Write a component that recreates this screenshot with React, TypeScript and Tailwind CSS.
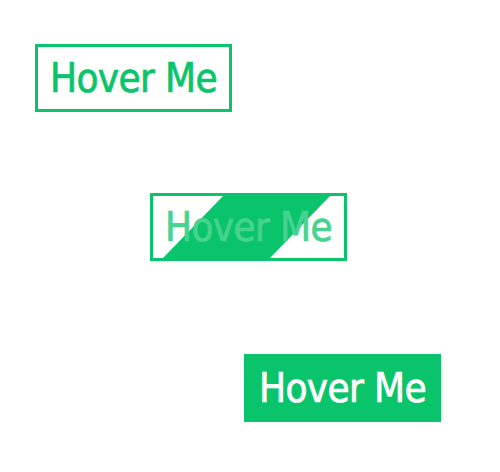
const outline = 'border-[3px] border-[#0ac46b]';
const label = "font-['DejaVu_Sans_Condensed','DejaVu_Sans',sans-serif] text-[40px] leading-none tracking-[-0.6px] [-webkit-text-stroke:0.7px_currentColor]";

export default function App() {
  return (
    <div className="w-[500px] h-[472px] bg-white">
      <div className="flex flex-col items-start pt-[44px]">
        {/* outline button */}
        <button className={`ml-[35px] w-[197px] h-[68px] ${outline} bg-white text-[#0ac46b] ${label} flex items-center justify-center`}>
          Hover Me
        </button>

        {/* mid-hover: diagonal sweep */}
        <button className={`relative ml-[150px] mt-[81px] w-[197px] h-[68px] ${outline} bg-white text-[#45d38f] ${label} flex items-center justify-center overflow-hidden`}>
          <span className="absolute inset-0 bg-[#0ac46b] [clip-path:polygon(70px_0,177px_0,117px_100%,10px_100%)]" />
          <span className="relative">Hover Me</span>
        </button>

        {/* filled state */}
        <button className={`ml-[244px] mt-[93px] w-[197px] h-[68px] bg-[#0ac46b] text-white ${label} flex items-center justify-center`}>
          Hover Me
        </button>
      </div>
    </div>
  );
}
